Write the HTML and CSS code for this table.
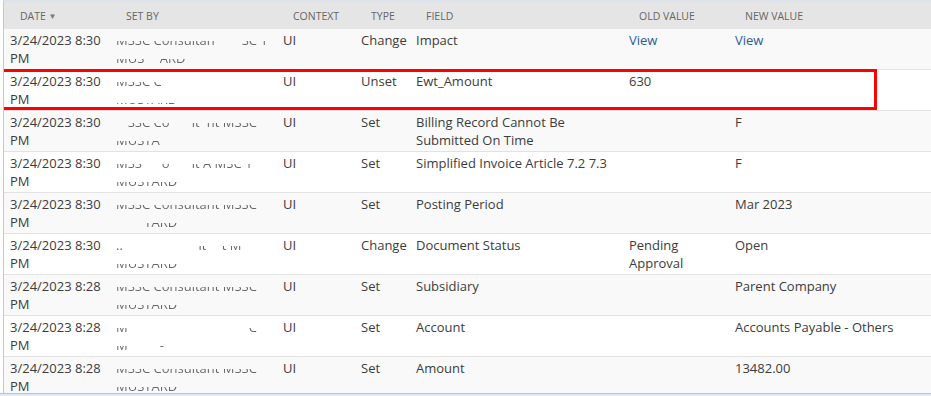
FILE: index.html
```html
<html>
  <link rel="stylesheet" href="styles.css">
  <head>
    <title>System Notes</title>
  </head>
  <body>
    <div class="notes">
      <table class="grid">
        <colgroup>
          <col class="c-date"><col class="c-by"><col class="c-ctx"><col class="c-type"><col class="c-field"><col class="c-old"><col class="c-new">
        </colgroup>
        <thead>
          <tr>
            <th>Date <span class="sort">&#9660;</span></th>
            <th>Set By</th>
            <th>Context</th>
            <th>Type</th>
            <th>Field</th>
            <th>Old Value</th>
            <th>New Value</th>
          </tr>
        </thead>
        <tbody>
          <tr>
            <td>3/24/2023 8:30 PM</td>
            <td class="by"><span class="cut">MSSC Consultan</span><span class="gap">t MS</span><span class="cut">SC 1</span><br><span class="cut">MUS</span><span class="gap">TA</span><span class="cut">ARD</span></td>
            <td>UI</td><td>Change</td><td>Impact</td>
            <td><a href="#">View</a></td><td><a href="#">View</a></td>
          </tr>
          <tr>
            <td>3/24/2023 8:30 PM</td>
            <td class="by"><span class="cut">MSSC C</span><span class="gap">onsultant</span><br><span class="low">MUSTARD</span></td>
            <td>UI</td><td>Unset</td><td>Ewt_Amount</td>
            <td>630</td><td></td>
          </tr>
          <tr>
            <td>3/24/2023 8:30 PM</td>
            <td class="by"><span class="gap">M</span><span class="cut">SSC Co</span><span class="gap">nsu</span><span class="cut">lt</span><span class="gap">a</span><span class="cut">nt MSSC</span><br><span class="cut">MUSTA</span></td>
            <td>UI</td><td>Set</td><td>Billing Record Cannot Be Submitted On Time</td>
            <td></td><td>F</td>
          </tr>
          <tr>
            <td>3/24/2023 8:30 PM</td>
            <td class="by"><span class="cut">MSS</span><span class="gap">C C</span><span class="cut">o</span><span class="gap">nsu</span><span class="cut">lt A MSC 1</span><br><span class="cut">MUSTARD</span></td>
            <td>UI</td><td>Set</td><td>Simplified Invoice Article 7.2 7.3</td>
            <td></td><td>F</td>
          </tr>
          <tr>
            <td>3/24/2023 8:30 PM</td>
            <td class="by"><span class="cut">MSSC Consultant MSSC</span><br><span class="gap">MUS</span><span class="cut">TARD</span></td>
            <td>UI</td><td>Set</td><td>Posting Period</td>
            <td></td><td>Mar 2023</td>
          </tr>
          <tr>
            <td>3/24/2023 8:30 PM</td>
            <td class="by"><span class="cut">..</span><span class="gap">MSSC Consu</span><span class="cut">lt</span><span class="gap">an</span><span class="cut">t M</span><br><span class="cut">MUSTARD</span></td>
            <td>UI</td><td>Change</td><td>Document Status</td>
            <td>Pending Approval</td><td>Open</td>
          </tr>
          <tr>
            <td>3/24/2023 8:28 PM</td>
            <td class="by"><span class="cut">MSSC Consultant MSSC</span><br><span class="cut">MUSTARD</span></td>
            <td>UI</td><td>Set</td><td>Subsidiary</td>
            <td></td><td>Parent Company</td>
          </tr>
          <tr>
            <td>3/24/2023 8:28 PM</td>
            <td class="by"><span class="cut">M</span><span class="gap">SSC Consultant MSS</span><span class="cut">C</span><br><span class="cut">M</span><span class="gap">USTA</span><span class="cut">-</span></td>
            <td>UI</td><td>Set</td><td>Account</td>
            <td></td><td>Accounts Payable - Others</td>
          </tr>
          <tr>
            <td>3/24/2023 8:28 PM</td>
            <td class="by"><span class="cut">MSSC Consultant MSSC</span><br><span class="cut">MUSTARD</span></td>
            <td>UI</td><td>Set</td><td>Amount</td>
            <td></td><td>13482.00</td>
          </tr>
        </tbody>
      </table>
      <div class="mark"></div>
    </div>
    <div class="footer"></div>
  </body>
</html>
```

FILE: styles.css
```css
html, body {
  margin: 0;
  background: #ffffff;
  font-family: "Open Sans", "Liberation Sans", sans-serif;
  font-size: 13px;
  color: #3c3c3c;
  overflow: hidden;
}
.notes {
  position: relative;
  height: 391px;
  overflow: hidden;
  margin-left: 3px;
  border-left: 1px solid #c8c8c8;
  border-top: 2px solid #dde4ee;
}
.grid {
  border-collapse: collapse;
  table-layout: fixed;
  width: 960px;
}
.c-date { width: 106px; }
.c-by { width: 167px; }
.c-ctx { width: 78px; }
.c-type { width: 55px; }
.c-field { width: 213px; }
.c-old { width: 106px; }
.c-new { width: 235px; }
.grid th {
  background: #e5e5e5;
  height: 27px;
  padding: 0 0 0 16px;
  text-align: left;
  font-weight: normal;
  font-size: 10.5px;
  text-transform: uppercase;
  color: #666666;
  white-space: nowrap;
}
.sort {
  font-size: 8px;
  color: #777777;
  vertical-align: 1px;
}
.grid td {
  height: 36px;
  padding: 2px 6px 2px 6px;
  vertical-align: top;
  line-height: 18px;
  font-size: 13px;
  border-bottom: 1px solid #e2e2e2;
}
.grid tbody tr:nth-child(odd) td {
  background: #f9f9f9;
}
.grid a {
  color: #2a5a9e;
  text-decoration: none;
}
.by {
  white-space: nowrap;
  overflow: hidden;
}
.cut {
  background: linear-gradient(to bottom, transparent 58%, #666666 58%);
  -webkit-background-clip: text;
  background-clip: text;
  color: transparent;
}
.low {
  background: linear-gradient(to bottom, transparent 75%, #666666 75%);
  -webkit-background-clip: text;
  background-clip: text;
  color: transparent;
}
.gap {
  color: transparent;
}
.mark {
  position: absolute;
  left: -4px;
  top: 67px;
  width: 871px;
  height: 35px;
  border: 3px solid #ff0000;
}
.footer {
  border-top: 1px solid #b8c2d2;
  background: #dfe8f6;
  height: 10px;
}
```
